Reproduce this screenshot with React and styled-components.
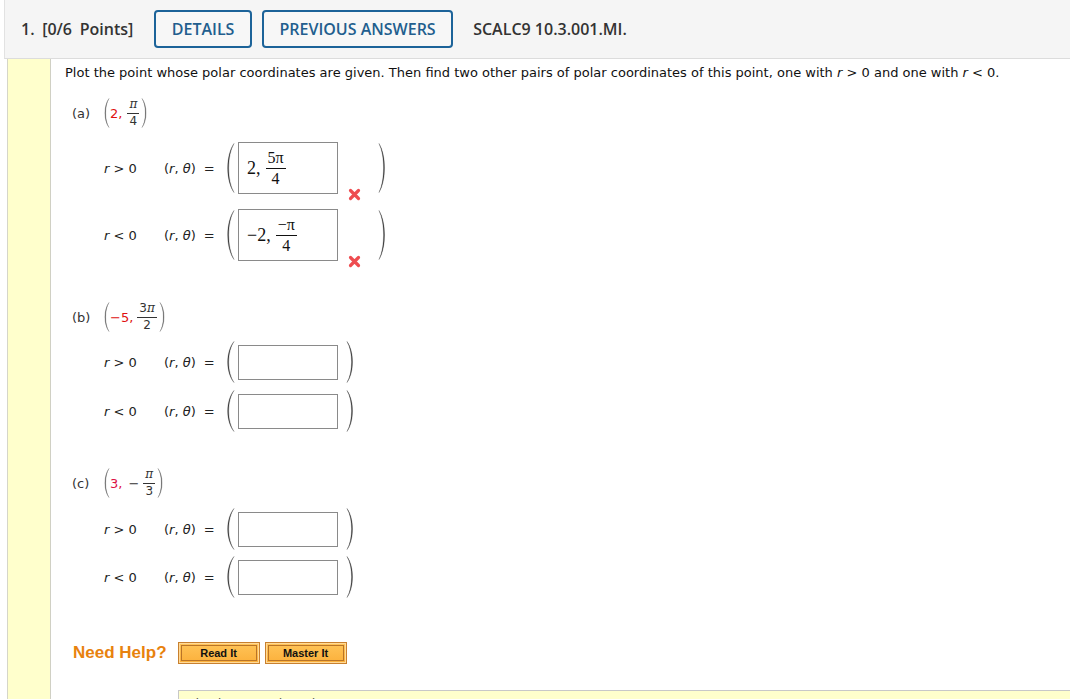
import React from "react";
import styled, { createGlobalStyle } from "styled-components";

const GlobalStyle = createGlobalStyle`
  html, body {
    margin: 0;
    padding: 0;
    background: #fff;
    overflow: hidden;
  }
  body {
    font-family: "DejaVu Sans", Verdana, sans-serif;
    color: #222;
  }
`;

const Paren = ({ h = 50, w = 10, right, color = "#333", thick = 1.3 }) => {
  const a = w - 1;
  const b = 0.6;
  const c = b + thick;
  const d = right
    ? `M1 0.5 C ${w - b} ${h * 0.25}, ${w - b} ${h * 0.75}, 1 ${h - 0.5} C ${w - c} ${h * 0.75}, ${w - c} ${h * 0.25}, 1 0.5 Z`
    : `M${a} 0.5 C ${b} ${h * 0.25}, ${b} ${h * 0.75}, ${a} ${h - 0.5} C ${c} ${h * 0.75}, ${c} ${h * 0.25}, ${a} 0.5 Z`;
  return (
    <svg width={w} height={h} viewBox={`0 0 ${w} ${h}`}>
      <path d={d} fill={color} stroke={color} strokeWidth="0.3" />
    </svg>
  );
};

const Cross = () => (
  <svg width="13" height="13" viewBox="0 0 13 13">
    <path d="M2.5 2.5 L10.5 10.5 M10.5 2.5 L2.5 10.5" stroke="#ee4c50" strokeWidth="3.2" strokeLinecap="round" />
  </svg>
);

const Page = styled.div`
  width: 1070px;
`;

const Header = styled.div`
  margin-left: 4px;
  height: 58px;
  background: #f5f5f5;
  border-left: 1px solid #e2e2e2;
  border-bottom: 1px solid #dcdcdc;
  display: flex;
  align-items: center;
  padding-left: 16px;
  font-family: "Open Sans", "Liberation Sans", sans-serif;
  font-weight: 600;
  font-size: 16px;
  color: #333;
`;

const Points = styled.span`
  margin-right: 21px;
  word-spacing: 3.5px;
`;

const TabButton = styled.div`
  height: 38px;
  box-sizing: border-box;
  padding: 0 15.5px;
  display: flex;
  align-items: center;
  border: 2px solid #1c6399;
  border-radius: 4px;
  color: #225e8e;
  margin-right: 10px;
  background: #f7f7f7;
`;

const Code = styled.span`
  margin-left: 10px;
`;

const Body = styled.div`
  display: flex;
  min-height: 760px;
`;

const Strip = styled.div`
  width: 42px;
  margin-left: 7px;
  background: #ffffcc;
  border-left: 1px solid #d6d6c8;
  border-right: 1px solid #d0d0c4;
`;

const Main = styled.div`
  flex: 1;
  padding: 6px 0 0 14px;
  font-size: 13px;
`;

const Intro = styled.p`
  margin: 0;
  line-height: 16px;
  color: #111;
`;

const I = styled.i`
  font-style: italic;
`;

const PartLabel = styled.div`
  display: flex;
  align-items: center;
  height: 32px;
  margin-top: ${(p) => p.$mt}px;
  padding-left: 7px;
  color: #333;
`;

const Letter = styled.span`
  width: 31px;
`;

const Red = styled.span`
  color: ${(p) => p.$c || "#e01010"};
`;

const Minus = styled.span`
  margin: 0 4px 0 6px;
`;

const Frac = styled.span`
  display: inline-flex;
  flex-direction: column;
  align-items: center;
  font-size: ${(p) => p.$size}px;
  line-height: ${(p) => p.$lh || 1.1};
  margin: 0 ${(p) => p.$mr || 2}px 0 ${(p) => p.$ml || 0}px;
  font-family: ${(p) => (p.$serif ? '"Liberation Serif", serif' : "inherit")};
`;

const Num = styled.span`
  padding: 0 2px 1px;
`;

const Den = styled.span`
  align-self: stretch;
  text-align: center;
  border-top: 1px solid currentColor;
  padding: 1px 2px 0;
`;

const Pi = styled.span`
  font-family: "DejaVu Serif", serif;
  font-style: italic;
`;

const Row = styled.div`
  display: flex;
  align-items: center;
  height: ${(p) => p.$h}px;
  margin-top: ${(p) => p.$mt}px;
  padding-left: 39px;
`;

const Cond = styled.span`
  width: 60px;
  color: #222;
`;

const Eq = styled.span`
  width: 61px;
  color: #222;
  span {
    margin-left: 8px;
  }
`;

const AnswerBox = styled.div`
  box-sizing: border-box;
  width: 100px;
  height: ${(p) => p.$h}px;
  margin-left: 3px;
  border: 1px solid #8a8a8a;
  background: #fff;
  display: flex;
  align-items: center;
  padding-left: 8px;
  font-family: "Liberation Serif", serif;
  font-size: 18px;
  color: #111;
`;

const Mark = styled.span`
  align-self: flex-end;
  margin: 0 17px -6px 10px;
  display: flex;
`;

const CloseGap = styled.span`
  margin-left: ${(p) => p.$ml}px;
  display: flex;
`;

const HelpRow = styled.div`
  display: flex;
  align-items: center;
  height: 22px;
  margin-top: 44px;
  padding-left: 8px;
`;

const NeedHelp = styled.span`
  font-family: "Liberation Sans", Arial, sans-serif;
  font-weight: bold;
  font-size: 17px;
  color: #e8820e;
  margin-right: 11px;
`;

const HelpButton = styled.div`
  box-sizing: border-box;
  width: 82px;
  height: 22px;
  padding: 2px;
  margin-right: 5px;
  border: 1px solid #c8802e;
  background: linear-gradient(#ffc458, #fbb03b);
  box-shadow: inset 0 0 0 1px #ffd998;
  span {
    box-sizing: border-box;
    display: flex;
    align-items: center;
    justify-content: center;
    height: 100%;
    border: 1px solid #b97428;
    font-family: "Liberation Sans", Arial, sans-serif;
    font-weight: bold;
    font-size: 11px;
    color: #111;
  }
`;

const Notice = styled.div`
  margin: 26px 0 0 113px;
  height: 40px;
  background: #ffffcc;
  border-top: 1px solid #c8c8c8;
  border-left: 1px solid #c8c8c8;
  padding: 5px 0 0 8px;
  font-size: 13px;
  color: #555;
  a {
    color: #1760a8;
    text-decoration: none;
  }
`;

const Answer = ({ boxH, parenH, wrong, closeMl, children }) => (
  <>
    <Paren h={parenH} w={10} />
    <AnswerBox $h={boxH}>{children}</AnswerBox>
    {wrong ? (
      <Mark>
        <Cross />
      </Mark>
    ) : null}
    <CloseGap $ml={wrong ? 0 : closeMl}>
      <Paren h={parenH} w={9} right />
    </CloseGap>
  </>
);

const Condition = ({ sign }) => (
  <Cond>
    <I>r</I> {sign} 0
  </Cond>
);

const Equals = () => (
  <Eq>
    (<I>r</I>, <I>θ</I>)<span>=</span>
  </Eq>
);

const EmptyRow = ({ sign, mt }) => (
  <Row $h={42} $mt={mt}>
    <Condition sign={sign} />
    <Equals />
    <Answer parenH={42} boxH={35} closeMl={8} />
  </Row>
);

const LabelParen = ({ right }) => <Paren h={30} w={7} right={right} thick={0.9} color="#555" />;

export default function App() {
  return (
    <Page>
      <GlobalStyle />
      <Header>
        <Points>1. [0/6 Points]</Points>
        <TabButton>DETAILS</TabButton>
        <TabButton>PREVIOUS ANSWERS</TabButton>
        <Code>SCALC9 10.3.001.MI.</Code>
      </Header>
      <Body>
        <Strip />
        <Main>
          <Intro>
            Plot the point whose polar coordinates are given. Then find two other pairs of polar coordinates of this
            point, one with <I>r</I> &gt; 0 and one with <I>r</I> &lt; 0.
          </Intro>

          <PartLabel $mt={16}>
            <Letter>(a)</Letter>
            <LabelParen />
            <Red>2,</Red>
            <Frac $size={12} $ml={5}>
              <Num>
                <Pi>π</Pi>
              </Num>
              <Den>4</Den>
            </Frac>
            <LabelParen right />
          </PartLabel>
          <Row $h={54} $mt={12}>
            <Condition sign=">" />
            <Equals />
            <Answer parenH={50} boxH={52} wrong>
              2,
              <Frac $size={16} $serif $ml={5}>
                <Num>5π</Num>
                <Den>4</Den>
              </Frac>
            </Answer>
          </Row>
          <Row $h={54} $mt={13}>
            <Condition sign="<" />
            <Equals />
            <Answer parenH={50} boxH={52} wrong>
              −2,
              <Frac $size={16} $serif $ml={5}>
                <Num>−π</Num>
                <Den>4</Den>
              </Frac>
            </Answer>
          </Row>

          <PartLabel $mt={39}>
            <Letter>(b)</Letter>
            <LabelParen />
            <Red>−5,</Red>
            <Frac $size={12} $ml={4}>
              <Num>
                3<Pi>π</Pi>
              </Num>
              <Den>2</Den>
            </Frac>
            <LabelParen right />
          </PartLabel>
          <EmptyRow sign=">" mt={8} />
          <EmptyRow sign="<" mt={7} />

          <PartLabel $mt={35}>
            <Letter>(c)</Letter>
            <LabelParen />
            <Red $c="#dd1144">3,</Red>
            <Minus>−</Minus>
            <Frac $size={12}>
              <Num>
                <Pi>π</Pi>
              </Num>
              <Den>3</Den>
            </Frac>
            <LabelParen right />
          </PartLabel>
          <EmptyRow sign=">" mt={9} />
          <EmptyRow sign="<" mt={6} />

          <HelpRow>
            <NeedHelp>Need Help?</NeedHelp>
            <HelpButton>
              <span>Read It</span>
            </HelpButton>
            <HelpButton>
              <span>Master It</span>
            </HelpButton>
          </HelpRow>

          <Notice>
            Viewing Saved Work <a href="#">Revert to Last Response</a>
          </Notice>
        </Main>
      </Body>
    </Page>
  );
}
